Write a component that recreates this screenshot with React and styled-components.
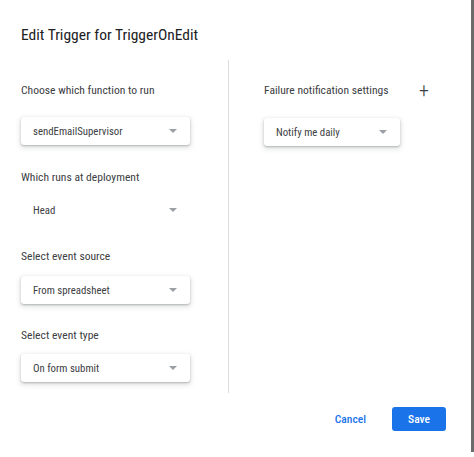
import styled, { createGlobalStyle } from "styled-components";

const GlobalStyle = createGlobalStyle`
  html, body {
    margin: 0;
    padding: 0;
    background: #fff;
  }
  body {
    font-family: Roboto, "Liberation Sans", Arial, sans-serif;
    font-stretch: semi-condensed;
    color: #3c4043;
  }
  button {
    font-stretch: inherit;
  }
`;

const Page = styled.div`
  display: flex;
  width: 474px;
  height: 457px;
  overflow: hidden;
`;

const Dialog = styled.div`
  width: 471px;
  height: 457px;
  box-sizing: border-box;
  padding: 24px 0 0 21px;
  display: flex;
  flex-direction: column;
  background: #fff;
`;

const Edge = styled.div`
  width: 3px;
  height: 452px;
  background: #6b6b6b;
`;

const Title = styled.h1`
  margin: 0;
  height: 22px;
  line-height: 22px;
  font-size: 15.5px;
  font-weight: 400;
  color: #202124;
`;

const Body = styled.div`
  display: flex;
  margin-top: 14px;
  height: 333px;
`;

const Column = styled.div`
  width: ${(p) => p.$width}px;
  box-sizing: border-box;
  padding-top: 22px;
  padding-left: ${(p) => p.$pad || 0}px;
  border-right: ${(p) => (p.$divider ? "1px solid #dadce0" : "none")};
  display: flex;
  flex-direction: column;
  align-items: flex-start;
`;

const LabelRow = styled.div`
  display: flex;
  align-items: center;
  justify-content: space-between;
  width: ${(p) => (p.$wide ? "165px" : "auto")};
  margin-top: ${(p) => p.$top || 0}px;
`;

const Label = styled.div`
  height: 16px;
  line-height: 16px;
  font-size: 11.6px;
  color: #3c4043;
`;

const Plus = styled.span`
  font-size: 20px;
  font-weight: 300;
  line-height: 16px;
  color: #3c4043;
`;

const Select = styled.div`
  display: flex;
  align-items: center;
  justify-content: space-between;
  box-sizing: border-box;
  width: ${(p) => p.$width || 169}px;
  height: 28px;
  margin-top: ${(p) => p.$top || 0}px;
  padding: 0 13px 0 12px;
  border-radius: 3px;
  background: #fff;
  box-shadow: ${(p) =>
    p.$flat
      ? "none"
      : "0 1px 2px rgba(60,64,67,0.3), 0 2px 5px 1px rgba(60,64,67,0.15)"};
  font-size: 10.8px;
  color: #3c4043;
`;

const Arrow = styled.span`
  width: 0;
  height: 0;
  border-left: 4.5px solid transparent;
  border-right: 4.5px solid transparent;
  border-top: 4.5px solid #9aa0a6;
`;

const Footer = styled.div`
  display: flex;
  align-items: center;
  justify-content: flex-end;
  gap: 26px;
  margin-top: 14px;
  padding-right: 25px;
`;

const TextButton = styled.button`
  border: none;
  background: none;
  padding: 0;
  font-family: inherit;
  font-size: 11.5px;
  font-weight: 500;
  color: #1a73e8;
`;

const PrimaryButton = styled.button`
  width: 54px;
  height: 24px;
  border: none;
  border-radius: 3px;
  background: #1a73e8;
  font-family: inherit;
  font-size: 11.5px;
  font-weight: 500;
  color: #fff;
`;

function Dropdown({ value, ...rest }) {
  return (
    <Select {...rest}>
      <span>{value}</span>
      <Arrow />
    </Select>
  );
}

export default function App() {
  return (
    <Page>
      <GlobalStyle />
      <Dialog>
        <Title>Edit Trigger for TriggerOnEdit</Title>
        <Body>
          <Column $width={208} $divider>
            <LabelRow>
              <Label>Choose which function to run</Label>
            </LabelRow>
            <Dropdown value="sendEmailSupervisor" $top={19} />
            <LabelRow $top={24}>
              <Label>Which runs at deployment</Label>
            </LabelRow>
            <Dropdown value="Head" $top={11} $flat />
            <LabelRow $top={24}>
              <Label>Select event source</Label>
            </LabelRow>
            <Dropdown value="From spreadsheet" $top={12} />
            <LabelRow $top={23}>
              <Label>Select event type</Label>
            </LabelRow>
            <Dropdown value="On form submit" $top={11} />
          </Column>
          <Column $width={220} $pad={35}>
            <LabelRow $wide>
              <Label>Failure notification settings</Label>
              <Plus>+</Plus>
            </LabelRow>
            <Dropdown value="Notify me daily" $top={20} $width={136} />
          </Column>
        </Body>
        <Footer>
          <TextButton>Cancel</TextButton>
          <PrimaryButton>Save</PrimaryButton>
        </Footer>
      </Dialog>
      <Edge />
    </Page>
  );
}
